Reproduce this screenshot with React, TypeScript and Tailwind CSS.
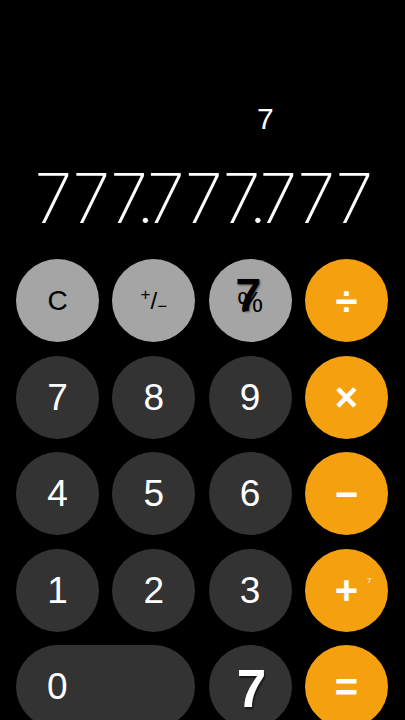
import React from "react";

const sans = { fontFamily: '"Liberation Sans", Arial, sans-serif' };

function Btn({
  children,
  kind,
  className = "",
}: {
  children: React.ReactNode;
  kind: "light" | "dark" | "orange";
  className?: string;
}) {
  const bg =
    kind === "light"
      ? "bg-[#a5a5a5] text-black"
      : kind === "dark"
      ? "bg-[#333333] text-white"
      : "bg-[#f5a10f] text-white";
  return (
    <div
      className={`relative flex h-[83px] w-[83px] items-center justify-center rounded-full ${bg} ${className}`}
    >
      {children}
    </div>
  );
}

export default function App() {
  const digit = "text-[37px] leading-none";
  const op = "text-[40px] font-bold leading-none";
  return (
    <div
      className="flex h-[720px] w-[405px] flex-col overflow-hidden bg-black"
      style={sans}
    >
      {/* display */}
      <div className="pt-[104px]">
        <div className="pl-[257px] text-[30px] leading-[30px] text-white">7</div>
        <div
          className="mt-[30px] whitespace-nowrap pr-[33px] text-right text-[68px] font-extralight leading-[68px] tracking-[-1px] text-white"
          style={{ fontFamily: 'Inter, "Liberation Sans", sans-serif' }}
        >
          <span>777</span>
          <span className="-ml-[11px] inline-block w-0 overflow-visible">.</span>
          <span className="ml-[11px]">777</span>
          <span className="-ml-[11px] inline-block w-0 overflow-visible">.</span>
          <span className="ml-[11px]">777</span>
        </div>
      </div>

      {/* keypad */}
      <div className="mt-[27px] grid grid-cols-[repeat(4,83px)] gap-x-[13.3px] gap-y-[13.5px] pl-[16px]">
        <Btn kind="light">
          <span className="text-[28px] leading-none">C</span>
        </Btn>
        <Btn kind="light">
          <span className="flex items-center text-[26px] leading-none">
            <span className="-mt-[12px] text-[17px]">+</span>
            <span className="text-[24px]">/</span>
            <span className="mt-[12px] text-[17px]">−</span>
          </span>
        </Btn>
        <Btn kind="light">
          <span className="mt-[3px] text-[29px] leading-none">%</span>
          <span className="absolute left-[27px] top-[13px] text-[46px] font-bold leading-none text-black [text-shadow:1px_1px_2px_rgba(0,0,0,0.5)]">
            7
          </span>
        </Btn>
        <Btn kind="orange">
          <span className={op}>÷</span>
        </Btn>

        <Btn kind="dark">
          <span className={digit}>7</span>
        </Btn>
        <Btn kind="dark">
          <span className={digit}>8</span>
        </Btn>
        <Btn kind="dark">
          <span className={digit}>9</span>
        </Btn>
        <Btn kind="orange">
          <span className={op}>×</span>
        </Btn>

        <Btn kind="dark">
          <span className={digit}>4</span>
        </Btn>
        <Btn kind="dark">
          <span className={digit}>5</span>
        </Btn>
        <Btn kind="dark">
          <span className={digit}>6</span>
        </Btn>
        <Btn kind="orange">
          <span className={op}>−</span>
        </Btn>

        <Btn kind="dark">
          <span className={digit}>1</span>
        </Btn>
        <Btn kind="dark">
          <span className={digit}>2</span>
        </Btn>
        <Btn kind="dark">
          <span className={digit}>3</span>
        </Btn>
        <Btn kind="orange">
          <span className={op}>+</span>
          <span className="absolute left-[62px] top-[28px] text-[8px] leading-none text-white">
            7
          </span>
        </Btn>

        <div className="col-span-2 flex h-[83px] items-center rounded-full bg-[#333333] pl-[31px] text-white">
          <span className={digit}>0</span>
        </div>
        <Btn kind="dark">
          <span className="ml-[3px] mt-[4px] text-[53px] font-bold leading-none text-white [text-shadow:1px_2px_2px_rgba(0,0,0,0.6)]">
            7
          </span>
        </Btn>
        <Btn kind="orange">
          <span className={op}>=</span>
        </Btn>
      </div>
    </div>
  );
}
